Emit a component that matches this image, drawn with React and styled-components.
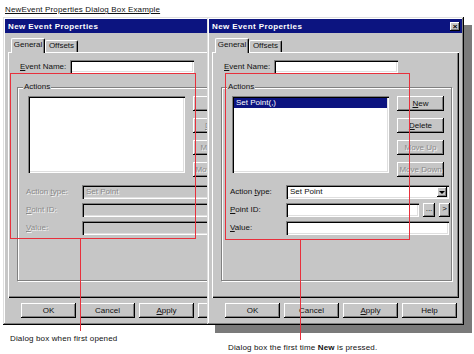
import React from 'react';
import styled, { createGlobalStyle, css } from 'styled-components';

const GlobalStyle = createGlobalStyle`
  html, body { margin: 0; padding: 0; background: #fff; }
  body { font-family: "Liberation Sans", Arial, sans-serif; }
`;

const GRAY = '#c6c6c6';
const NAVY = '#0c1480';
const RED = '#e8303c';

const raised = css`
  box-shadow: inset -1px -1px #000, inset 1px 1px #fff, inset -2px -2px #808080;
`;

const sunken = css`
  box-shadow: inset 1px 1px #808080, inset 2px 2px #000, inset -1px -1px #fff, inset -2px -2px #dfdfdf;
`;

const disabledText = css`
  color: #8a8a8a;
  text-shadow: 1px 1px #f4f4f4;
`;

const Canvas = styled.div`
  position: relative;
  width: 474px;
  height: 354px;
  overflow: hidden;
  background: #fff;
`;

const Caption = styled.div`
  position: absolute;
  left: ${p => p.x}px;
  top: ${p => p.y}px;
  font-size: 8px;
  line-height: 10px;
  color: #111;
  white-space: nowrap;
  letter-spacing: 0.15px;
  text-decoration: ${p => (p.underline ? 'underline' : 'none')};
  b { font-weight: bold; }
`;

const Window = styled.div`
  position: absolute;
  left: ${p => p.x}px;
  top: 17px;
  width: 257px;
  height: 308px;
  box-sizing: border-box;
  padding: 2px;
  background: ${GRAY};
  display: flex;
  flex-direction: column;
  z-index: ${p => (p.front ? 2 : 1)};
  box-shadow: inset -1px -1px #000, inset 1px 1px #dfdfdf, inset -2px -2px #808080,
    inset 2px 2px #fff${p => (p.front ? ', 8px 8px 0 #7a7a7a' : '')};
`;

const TitleBar = styled.div`
  height: 14px;
  background: ${NAVY};
  display: flex;
  align-items: center;
  justify-content: space-between;
  padding: 0 2px 0 3px;
`;

const TitleText = styled.span`
  color: #fff;
  font-weight: bold;
  font-size: 8px;
  letter-spacing: 0.4px;
`;

const CloseBox = styled.span`
  width: 10px;
  height: 9px;
  background: ${GRAY};
  ${raised};
  font-size: 8px;
  font-weight: bold;
  line-height: 9px;
  text-align: center;
  color: #000;
`;

const TabRow = styled.div`
  display: flex;
  align-items: flex-end;
  height: 14px;
  margin: 5px 0 0 6px;
  position: relative;
  z-index: 1;
`;

const Tab = styled.div`
  box-sizing: border-box;
  width: ${p => p.w}px;
  height: ${p => (p.active ? 15 : 12)}px;
  margin-bottom: ${p => (p.active ? -1 : 0)}px;
  background: ${GRAY};
  border-top: 1px solid #fff;
  border-left: 1px solid #fff;
  border-right: 1px solid #000;
  border-radius: 2px 2px 0 0;
  box-shadow: inset -1px 0 #808080;
  font-size: 8px;
  line-height: ${p => (p.active ? 12 : 10)}px;
  text-align: center;
  color: #111;
`;

const Panel = styled.div`
  box-sizing: border-box;
  height: 246px;
  margin: 0 3px;
  padding: 7px 7px 0 8px;
  border-top: 1px solid #fff;
  border-left: 1px solid #fff;
  box-shadow: inset -1px -1px #000, inset -2px -2px #808080;
  display: flex;
  flex-direction: column;
`;

const Row = styled.div`
  display: flex;
  align-items: center;
  gap: ${p => p.gap || 0}px;
  margin-left: ${p => p.indent || 0}px;
  height: ${p => p.h || 14}px;
`;

const Label = styled.span`
  width: ${p => p.w}px;
  flex: none;
  font-size: 8px;
  line-height: 10px;
  color: #111;
  white-space: nowrap;
  ${p => p.disabled && disabledText};
`;

const Field = styled.div`
  box-sizing: border-box;
  width: ${p => p.w}px;
  height: ${p => p.h || 14}px;
  flex: none;
  background: ${p => (p.disabled ? GRAY : '#fff')};
  ${sunken};
  display: flex;
  align-items: center;
  justify-content: space-between;
  padding: 0 2px 0 4px;
  font-size: 8px;
  line-height: 10px;
  color: #111;
  ${p => p.disabled && disabledText};
`;

const ArrowBox = styled.span`
  width: 10px;
  height: 10px;
  background: ${GRAY};
  ${raised};
  display: flex;
  align-items: center;
  justify-content: center;
  &::after {
    content: '';
    border-left: 3px solid transparent;
    border-right: 3px solid transparent;
    border-top: 3px solid #000;
  }
`;

const GroupBox = styled.div`
  position: relative;
  box-sizing: border-box;
  height: 194px;
  margin-top: 14px;
  padding: 8px 5px 0 8px;
  border: 1px solid #808080;
  box-shadow: inset 1px 1px #fff, 1px 1px #fff;
  display: flex;
  flex-direction: column;
`;

const Legend = styled.span`
  position: absolute;
  top: -6px;
  left: 5px;
  padding: 0 1px;
  background: ${GRAY};
  font-size: 8px;
  line-height: 10px;
  color: #111;
`;

const ListRow = styled.div`
  display: flex;
  align-items: flex-start;
  gap: 8px;
  margin-left: 2px;
  margin-bottom: 8px;
`;

const ListBox = styled.div`
  box-sizing: border-box;
  width: 157px;
  height: 77px;
  background: #fff;
  ${sunken};
  padding: 2px;
`;

const ListItem = styled.div`
  height: 10px;
  background: ${NAVY};
  color: #fff;
  font-size: 8px;
  line-height: 10px;
  padding-left: 2px;
`;

const ButtonColumn = styled.div`
  display: flex;
  flex-direction: column;
  gap: 7px;
`;

const Button = styled.div`
  box-sizing: border-box;
  width: ${p => p.w}px;
  height: 15px;
  flex: none;
  background: ${GRAY};
  ${raised};
  font-size: 8px;
  line-height: 15px;
  text-align: center;
  color: #111;
  ${p => p.disabled && disabledText};
`;

const SmallButton = styled(Button)`
  height: 14px;
  line-height: 12px;
`;

const FormRows = styled.div`
  display: flex;
  flex-direction: column;
  gap: 4px;
`;

const ButtonBar = styled.div`
  display: flex;
  gap: 4px;
  margin-top: 5px;
  padding-left: 16px;
`;

const Overlay = styled.div`
  position: absolute;
  inset: 0;
  z-index: 10;
  pointer-events: none;
`;

const Frame = styled.div`
  position: absolute;
  left: ${p => p.x}px;
  top: ${p => p.y}px;
  width: ${p => p.w}px;
  height: ${p => p.h}px;
  box-sizing: border-box;
  border: 1px solid ${RED};
`;

const Leader = styled.div`
  position: absolute;
  left: ${p => p.x}px;
  top: ${p => p.y}px;
  width: 1px;
  height: ${p => p.h}px;
  background: ${RED};
`;

const Dialog = ({ x, front, pressed }) => {
  const off = !pressed;
  return (
    <Window x={x} front={front}>
      <TitleBar>
        <TitleText>New Event Properties</TitleText>
        {front && <CloseBox>×</CloseBox>}
      </TitleBar>
      <TabRow>
        <Tab active w={34}>General</Tab>
        <Tab w={33}>Offsets</Tab>
      </TabRow>
      <Panel>
        <Row indent={3} h={13}>
          <Label w={50}><u>E</u>vent Name:</Label>
          <Field w={124} h={13} />
        </Row>
        <GroupBox>
          <Legend>Actions</Legend>
          <ListRow>
            <ListBox>{pressed && <ListItem>Set Point(,)</ListItem>}</ListBox>
            <ButtonColumn>
              <Button w={47}><u>N</u>ew</Button>
              <Button w={47} disabled={off}><u>D</u>elete</Button>
              <Button w={47} disabled>Move Up</Button>
              <Button w={47} disabled>Move Down</Button>
            </ButtonColumn>
          </ListRow>
          <FormRows>
            <Row>
              <Label w={56} disabled={off}>Action <u>t</u>ype:</Label>
              <Field w={163} disabled={off}>
                Set Point
                <ArrowBox />
              </Field>
            </Row>
            <Row gap={4}>
              <Label w={52} disabled={off}><u>P</u>oint ID:</Label>
              <Field w={133} disabled={off} />
              <SmallButton w={12} disabled={off}>...</SmallButton>
              <SmallButton w={11} disabled={off}>&gt;</SmallButton>
            </Row>
            <Row>
              <Label w={56} disabled={off}><u>V</u>alue:</Label>
              <Field w={163} disabled={off} />
            </Row>
          </FormRows>
        </GroupBox>
      </Panel>
      <ButtonBar>
        <Button w={55}>OK</Button>
        <Button w={55}>Cancel</Button>
        <Button w={55}><u>A</u>pply</Button>
        <Button w={55}>Help</Button>
      </ButtonBar>
    </Window>
  );
};

export default function App() {
  return (
    <Canvas>
      <GlobalStyle />
      <Caption x={5} y={5} underline>NewEvent Properties Dialog Box Example</Caption>
      <Dialog x={3} />
      <Dialog x={207} front pressed />
      <Overlay>
        <Frame x={10} y={73} w={186} h={166} />
        <Leader x={80} y={238} h={93} />
        <Frame x={225} y={73} w={185} h={167} />
        <Leader x={300} y={239} h={101} />
      </Overlay>
      <Caption x={10} y={334}>Dialog box when first opened</Caption>
      <Caption x={228} y={343}>Dialog box the first time <b>New</b> is pressed.</Caption>
    </Canvas>
  );
}
